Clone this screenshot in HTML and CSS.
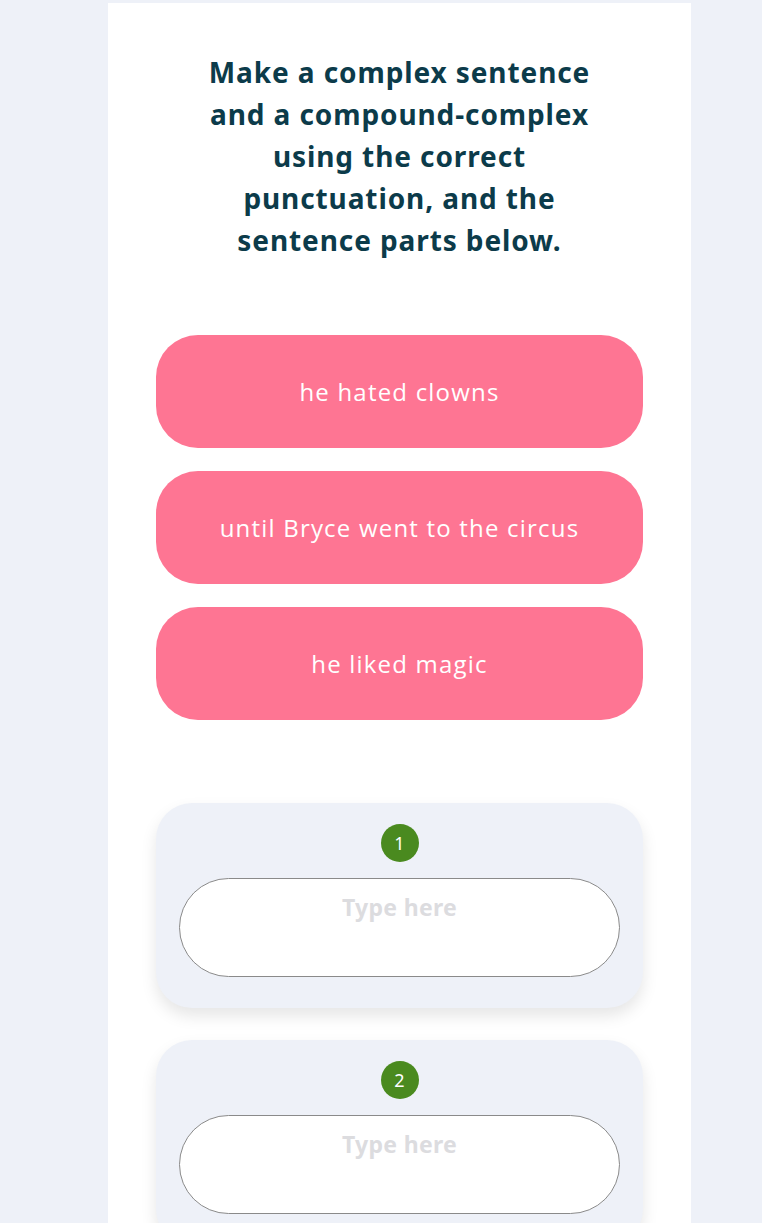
FILE: index.html
```html
<!DOCTYPE html>
<html lang="en">
<head>
<meta charset="utf-8">
<title>Sentence builder</title>
<link rel="stylesheet" href="styles.css">
</head>
<body>
<main class="panel">
  <h1 class="prompt">Make a complex sentence and a compound-complex using the correct punctuation, and the sentence parts below.</h1>
  <div class="parts">
    <div class="part">he hated clowns</div>
    <div class="part">until Bryce went to the circus</div>
    <div class="part">he liked magic</div>
  </div>
  <div class="answers">
    <section class="card">
      <span class="badge">1</span>
      <textarea class="entry" placeholder="Type here"></textarea>
    </section>
    <section class="card">
      <span class="badge">2</span>
      <textarea class="entry" placeholder="Type here"></textarea>
    </section>
  </div>
</main>
</body>
</html>
```

FILE: styles.css
```css
html, body {
  margin: 0;
  padding: 0;
  background: #eef1f8;
  height: 1223px;
  overflow: hidden;
}
body {
  font-family: "Noto Sans", "Open Sans", sans-serif;
}
.panel {
  margin: 3px 0 0 108px;
  width: 583px;
  background: #ffffff;
  box-sizing: border-box;
  padding: 48px 48px 40px;
  min-height: 1300px;
}
.prompt {
  margin: 0 auto;
  width: 420px;
  text-align: center;
  color: #0c3b4a;
  font-size: 28px;
  line-height: 42px;
  font-weight: 700;
  letter-spacing: 0.9px;
}
.parts {
  margin-top: 74px;
  display: flex;
  flex-direction: column;
  gap: 23px;
}
.part {
  height: 113px;
  border-radius: 42px;
  background: #fe7593;
  color: #fff;
  font-family: "Open Sans", "Noto Sans", sans-serif;
  font-size: 24px;
  font-weight: 400;
  letter-spacing: 1.2px;
  display: flex;
  align-items: center;
  justify-content: center;
}
.answers {
  margin-top: 83px;
  display: flex;
  flex-direction: column;
  gap: 32px;
}
.card {
  background: #eef1f8;
  border-radius: 36px;
  padding: 21px 23px 31px;
  display: flex;
  flex-direction: column;
  align-items: center;
  gap: 16px;
  box-shadow: 0 8px 16px rgba(0, 0, 0, 0.10);
}
.badge {
  width: 38px;
  height: 38px;
  border-radius: 50%;
  background: #4a8a1f;
  color: #fff;
  font-size: 18px;
  display: flex;
  align-items: center;
  justify-content: center;
}
.entry {
  display: block;
  width: 100%;
  height: 99px;
  box-sizing: border-box;
  border: 1px solid #8a8a8a;
  border-radius: 50px;
  background: #fff;
  resize: none;
  font-family: inherit;
  font-size: 23px;
  font-weight: 700;
  letter-spacing: 0.3px;
  text-align: center;
  padding: 12px 30px;
  outline: none;
}
.entry::placeholder {
  color: #dcdcdf;
  font-weight: 700;
}
```
